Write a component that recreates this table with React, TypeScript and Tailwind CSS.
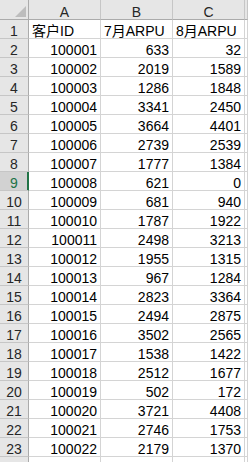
import React from "react";

const rows: [string, string, string][] = [
  ["100001", "633", "32"],
  ["100002", "2019", "1589"],
  ["100003", "1286", "1848"],
  ["100004", "3341", "2450"],
  ["100005", "3664", "4401"],
  ["100006", "2739", "2539"],
  ["100007", "1777", "1384"],
  ["100008", "621", "0"],
  ["100009", "681", "940"],
  ["100010", "1787", "1922"],
  ["100011", "2498", "3213"],
  ["100012", "1955", "1315"],
  ["100013", "967", "1284"],
  ["100014", "2823", "3364"],
  ["100015", "2494", "2875"],
  ["100016", "3502", "2565"],
  ["100017", "1538", "1422"],
  ["100018", "2512", "1677"],
  ["100019", "502", "172"],
  ["100020", "3721", "4408"],
  ["100021", "2746", "1753"],
  ["100022", "2179", "1370"],
];

const colHead =
  "flex items-end justify-center bg-[#e6e6e6] border-r border-b border-r-[#c6c6c6] border-b-[#ababab] leading-[14px] text-[#262626]";
const rowHead =
  "flex items-end justify-center bg-[#e6e6e6] border-r border-b border-r-[#ababab] border-b-[#c6c6c6] leading-[14px] text-[#262626]";
const cell = "flex items-end border-r border-b border-[#d4d4d4] leading-[14px] text-black";

export default function App() {
  return (
    <div className="w-[248px] h-[462px] overflow-hidden bg-white font-['Liberation_Sans','Noto_Sans_CJK_SC',sans-serif] text-[14px]">
      <div className="grid grid-cols-[29px_72px_72px_72px_1fr] grid-rows-[20px_repeat(24,19px)]">
        <div className="flex items-end justify-end pr-[2px] pb-[2px] bg-[#e6e6e6] border-r border-b border-r-[#ababab] border-b-[#ababab]">
          <svg width="11" height="11" viewBox="0 0 11 11">
            <polygon points="11,0 11,11 0,11" fill="#bdbdbd" />
          </svg>
        </div>
        <div className={colHead}>A</div>
        <div className={colHead}>B</div>
        <div className={colHead}>C</div>
        <div className={colHead}></div>

        <div className={rowHead}>1</div>
        <div className={cell + " pl-[3px]"}>客户ID</div>
        <div className={cell + " pl-[3px]"}>7月ARPU</div>
        <div className={cell + " pl-[3px]"}>8月ARPU</div>
        <div className={cell}></div>

        {rows.map((r, i) => {
          const n = i + 2;
          const sel = n === 9;
          return (
            <React.Fragment key={n}>
              <div
                className={
                  sel
                    ? "flex items-end justify-center bg-[#d2d2d2] border-r border-b border-r-[#217346] border-b-[#c6c6c6] shadow-[inset_-1px_0_0_#217346] leading-[14px] text-[#217346]"
                    : rowHead
                }
              >
                {n}
              </div>
              <div className={cell + " justify-end pr-[3px]"}>{r[0]}</div>
              <div className={cell + " justify-end pr-[3px]"}>{r[1]}</div>
              <div className={cell + " justify-end pr-[3px]"}>{r[2]}</div>
              <div className={cell}></div>
            </React.Fragment>
          );
        })}

        <div className={rowHead}></div>
        <div className={cell}></div>
        <div className={cell}></div>
        <div className={cell}></div>
        <div className={cell}></div>
      </div>
    </div>
  );
}
